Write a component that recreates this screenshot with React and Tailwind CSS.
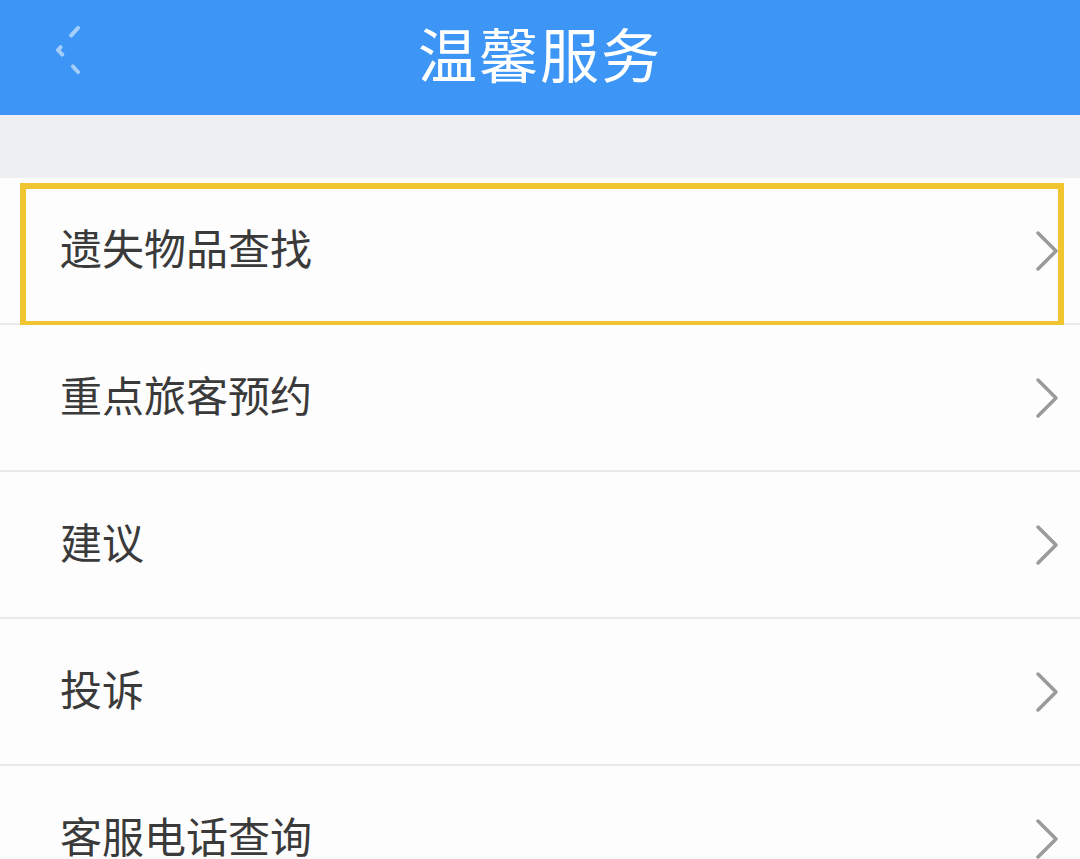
const items = ['遗失物品查找', '重点旅客预约', '建议', '投诉', '客服电话查询'];

const Chevron = () => (
  <svg width="26" height="44" viewBox="0 0 26 44" fill="none">
    <path d="M4 4 L22 22 L4 40" stroke="#9a9a9a" strokeWidth="3.5" strokeLinecap="round" strokeLinejoin="round" />
  </svg>
);

const App = () => {
  return (
    <div className="w-[1080px] h-[859px] overflow-hidden bg-white" style={{ fontFamily: '"Noto Sans CJK SC", "Noto Sans", sans-serif' }}>
      <header className="relative h-[115px] bg-[#3d96f6] flex items-center justify-center">
        <div className="absolute left-[48px] top-[24px] opacity-60">
          <svg width="36" height="52" viewBox="0 0 36 52" fill="none">
            <path d="M30 4 L10 26 L30 48" stroke="#eaf4ff" strokeWidth="4" strokeLinecap="round" strokeLinejoin="round" strokeDasharray="10 16" />
          </svg>
        </div>
        <h1 className="text-white text-[59px] leading-none tracking-[2px] pb-[10px]">温馨服务</h1>
      </header>
      <div className="h-[63px] bg-[#eeeff3]" />
      <ul>
        {items.map((label, i) => (
          <li key={label} className="relative h-[147px] border-b-2 border-[#eaeaea] bg-[#fdfdfd] flex items-center justify-between pl-[60px] pr-[20px]">
            <span className="text-[42px] text-[#3a3a3a] leading-none pb-[8px]">{label}</span>
            <Chevron />
            {i === 0 && (
              <div className="absolute left-[20px] right-[16px] top-[5px] bottom-[-4px] border-[6px] border-[#f0c530] pointer-events-none" />
            )}
          </li>
        ))}
      </ul>
    </div>
  );
};

export default App;
